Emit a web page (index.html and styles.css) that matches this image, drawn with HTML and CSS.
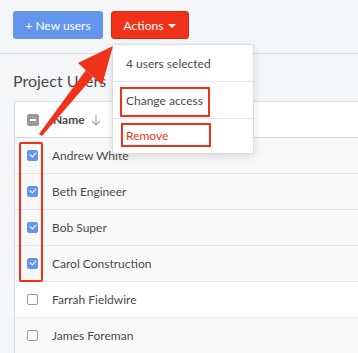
FILE: index.html
```html
<!DOCTYPE html>
<html lang="en">

<head>
	<meta charset="UTF-8">
	<title>Project Users</title>
	<link rel="stylesheet" href="styles.css">
</head>

<body>
	<div class="topbar">
		<button class="btn btn-blue">+ New users</button>
		<div class="actions">
			<button class="btn btn-red">Actions <span class="caret"></span></button>
			<div class="menu">
				<div class="menu-item">4 users selected</div>
				<div class="menu-item">Change access</div>
				<div class="menu-item danger">Remove</div>
				<div class="mark mark-change"></div>
				<div class="mark mark-remove"></div>
			</div>
		</div>
	</div>

	<div class="content">
		<h2 class="title">Project Users</h2>
		<div class="table">
			<div class="row head">
				<span class="cb cb-part"></span>
				<span class="name">Name</span>
				<svg class="sort" width="10" height="12" viewBox="0 0 10 12"><path d="M5 1v10M1 7l4 4 4-4" fill="none" stroke="#aaa" stroke-width="1.2"/></svg>
			</div>
			<div class="row alt"><span class="cb cb-on"></span><span class="name">Andrew White</span></div>
			<div class="row alt"><span class="cb cb-on"></span><span class="name">Beth Engineer</span></div>
			<div class="row alt"><span class="cb cb-on"></span><span class="name">Bob Super</span></div>
			<div class="row alt"><span class="cb cb-on"></span><span class="name">Carol Construction</span></div>
			<div class="row"><span class="cb"></span><span class="name">Farrah Fieldwire</span></div>
			<div class="row alt"><span class="cb"></span><span class="name">James Foreman</span></div>
			<div class="mark mark-checks"></div>
		</div>
	</div>

	<!-- annotation arrow -->
	<svg class="arrow" width="120" height="140" viewBox="0 0 120 140">
		<path d="M39 134 L42 136 L93 77 L86 70 Z" fill="#f0321a"/>
		<path d="M113 46 L78 63 L102 85 Z" fill="#f0321a"/>
	</svg>
</body>

</html>
```

FILE: styles.css
```css
* {
	margin: 0;
	padding: 0;
	box-sizing: border-box;
}

body {
	background: #f5f6f8;
	font-family: Lato, "Liberation Sans", sans-serif;
	color: #4a4a4a;
	overflow: hidden;
	width: 358px;
	height: 353px;
	position: relative;
}

.topbar {
	display: flex;
	gap: 8px;
	padding: 11px 13px 13px;
	border-bottom: 1px solid #dcdde0;
	height: 54px;
}

.btn {
	height: 28px;
	border: none;
	border-radius: 3px;
	color: #fff;
	font-family: inherit;
	font-size: 12px;
	padding: 0;
	white-space: nowrap;
}

.btn-blue {
	background: #6495ed;
	width: 90px;
}

.btn-red {
	background: #f0321a;
	width: 78px;
	border: 1px solid #d42a13;
}

.caret {
	display: inline-block;
	border-left: 4px solid transparent;
	border-right: 4px solid transparent;
	border-top: 4px solid #fff;
	vertical-align: middle;
	margin-left: 2px;
}

.actions {
	position: relative;
}

.menu {
	position: absolute;
	top: 33px;
	left: 1px;
	width: 142px;
	background: #fff;
	border: 1px solid #dcdcdc;
	border-radius: 2px;
	box-shadow: 0 3px 8px rgba(0, 0, 0, 0.12);
	z-index: 5;
}

.menu-item {
	height: 37px;
	line-height: 37px;
	padding-left: 13px;
	font-size: 12px;
	border-bottom: 1px solid #e6e6e6;
}

.menu-item.danger {
	color: #f0321a;
	border-bottom: none;
	height: 34px;
	line-height: 34px;
}

.mark {
	position: absolute;
	border: 2px solid #f0321a;
}

.mark-change {
	left: 7px;
	top: 42px;
	width: 90px;
	height: 30px;
}

.mark-remove {
	left: 8px;
	top: 78px;
	width: 90px;
	height: 24px;
}

.content {
	padding: 0 0 0 13px;
}

.title {
	font-size: 16px;
	font-weight: normal;
	height: 47px;
	line-height: 54px;
	color: #4a4a4a;
}

.table {
	position: relative;
	margin-left: 1px;
	border-left: 1px solid #dcdde0;
	border-top: 1px solid #dcdde0;
	background: #fff;
}

.row {
	display: flex;
	align-items: center;
	height: 36px;
	padding-left: 12px;
	border-bottom: 1px solid #e8e8e8;
	background: #fff;
	font-size: 12px;
}

.row.alt {
	background: #f8f8f8;
}

.row.head {
	font-weight: bold;
	border-bottom: 1px solid #d8d8d8;
}

.name {
	margin-left: 14px;
}

.sort {
	margin-left: 6px;
}

.cb {
	width: 11px;
	height: 11px;
	border: 1px solid #999;
	border-radius: 2px;
	background: #fff;
	position: relative;
}

.cb-on {
	background: #6495ed;
	border-color: #6495ed;
}

.cb-on::after {
	content: "";
	position: absolute;
	left: 2px;
	top: 1px;
	width: 5px;
	height: 3px;
	border-left: 1.5px solid #fff;
	border-bottom: 1.5px solid #fff;
	transform: rotate(-45deg);
}

.cb-part {
	background: #999;
	width: 12px;
	height: 12px;
}

.cb-part::after {
	content: "";
	position: absolute;
	left: 2px;
	top: 4.5px;
	width: 6px;
	height: 1.5px;
	background: #fff;
}

.mark-checks {
	left: 4px;
	top: 40px;
	width: 24px;
	height: 140px;
	border-radius: 2px;
}

.arrow {
	position: absolute;
	left: 0;
	top: 0;
	z-index: 10;
}
```
